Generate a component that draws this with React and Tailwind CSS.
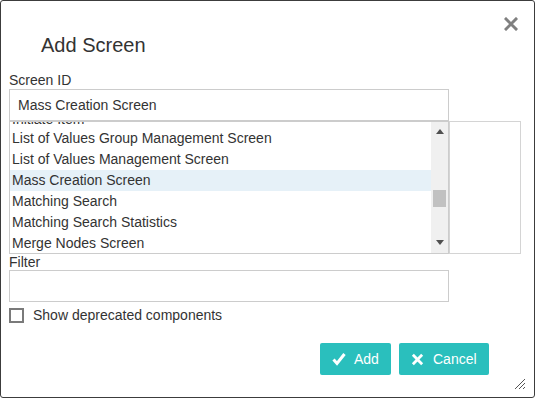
import React from 'react';

const items = [
  'Initiate Item',
  'List of Values Group Management Screen',
  'List of Values Management Screen',
  'Mass Creation Screen',
  'Matching Search',
  'Matching Search Statistics',
  'Merge Nodes Screen',
  'Merge Screen',
];

const selected = 'Mass Creation Screen';

const App = () => {
  return (
    <div
      className="relative w-[535px] h-[398px] bg-white border border-[#3c3c3c] rounded-[3px] text-[#333] px-[8px]"
      style={{ fontFamily: '"Liberation Sans", Arial, sans-serif' }}
    >
      {/* close */}
      <button className="absolute right-[16px] top-[16px] w-[14px] h-[14px]">
        <svg viewBox="0 0 14 14" className="w-[14px] h-[14px]">
          <path d="M2 2 L12 12 M12 2 L2 12" stroke="#808080" strokeWidth="3" strokeLinecap="square" />
        </svg>
      </button>

      <h2 className="pt-[32px] pl-[32px] text-[20px] leading-[24px]">Add Screen</h2>

      <label className="block mt-[15px] text-[14px] leading-[17px]">Screen ID</label>
      <div className="w-[440px] h-[32px] border border-[#ccc] flex items-center px-[8px] text-[14px]">
        Mass Creation Screen
      </div>

      {/* list + side panel */}
      <div className="flex">
        <div className="w-[440px] h-[133px] border border-[#ccc] flex overflow-hidden">
          <div className="flex-1 overflow-hidden">
            <div className="mt-[-15px]">
              {items.map((item, index) => (
                <div
                  key={item}
                  className={`h-[21px] flex items-center pl-[2px] text-[14px] whitespace-nowrap ${
                    item === selected ? 'bg-[#e6f1f8]' : ''
                  } ${index === 0 ? 'pt-[3px]' : ''}`}
                >
                  {item}
                </div>
              ))}
            </div>
          </div>
          <div className="w-[17px] bg-[#f0f0f0] flex flex-col items-center">
            <svg viewBox="0 0 8 5" className="w-[8px] h-[5px] mt-[7px]">
              <path d="M0 5 L4 0 L8 5 Z" fill="#505050" />
            </svg>
            <div className="w-[13px] h-[17px] bg-[#c1c1c1] mt-[56px]" />
            <div className="flex-1" />
            <svg viewBox="0 0 8 5" className="w-[8px] h-[5px] mb-[8px]">
              <path d="M0 0 L4 5 L8 0 Z" fill="#505050" />
            </svg>
          </div>
        </div>
        <div className="w-[72px] h-[133px] border border-[#d4d4d4]" />
      </div>

      <label className="block text-[14px] leading-[16px]">Filter</label>
      <div className="w-[440px] h-[32px] border border-[#ccc]" />

      <div className="flex items-center mt-[5px]">
        <div className="w-[15px] h-[15px] border-2 border-[#7a7a7a] bg-white" />
        <span className="ml-[9px] text-[14px] leading-[16px]">Show deprecated components</span>
      </div>

      <div className="flex justify-end gap-[8px] mt-[20px] pr-[37px]">
        <button className="h-[32px] w-[71px] rounded-[2px] bg-[#2abfbd] text-white text-[14px] flex items-center pl-[12px]">
          <svg viewBox="0 0 14 14" className="w-[14px] h-[14px]">
            <path d="M1.5 7.5 L5 11.5 L12.5 2" stroke="white" strokeWidth="3" fill="none" />
          </svg>
          <span className="ml-[8px]">Add</span>
        </button>
        <button className="h-[32px] w-[90px] rounded-[2px] bg-[#2abfbd] text-white text-[14px] flex items-center pl-[12px]">
          <svg viewBox="0 0 14 14" className="w-[13px] h-[13px]">
            <path d="M2 2 L12 12 M12 2 L2 12" stroke="white" strokeWidth="3" />
          </svg>
          <span className="ml-[9px]">Cancel</span>
        </button>
      </div>

      {/* resize handle */}
      <svg viewBox="0 0 12 12" className="absolute right-[8px] bottom-[7px] w-[12px] h-[12px]">
        <path d="M11 1 L1 11 M11 5 L5 11 M11 9 L9 11" stroke="#555" strokeWidth="1" />
      </svg>
    </div>
  );
};

export default App;
